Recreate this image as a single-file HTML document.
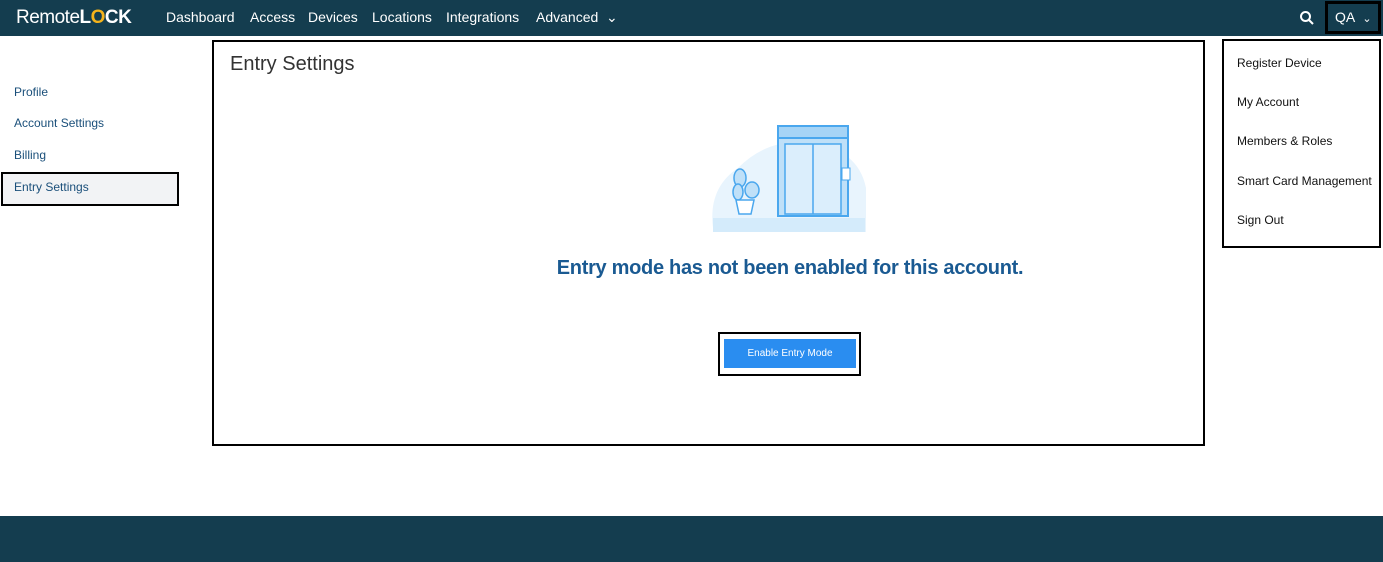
<!DOCTYPE html>
<html><head><style>
*{box-sizing:border-box;margin:0;padding:0}
body{width:1383px;height:562px;position:relative;background:#fff;font-family:"Liberation Sans",sans-serif;overflow:hidden}
.nav{position:absolute;left:0;top:0;width:1383px;height:36px;background:#143d4f;color:#fff}
.nav .logo{position:absolute;left:16px;top:7px;font-size:19px;letter-spacing:-0.5px}
.nav .logo b{font-weight:bold}
.nav .item{position:absolute;top:9px;font-size:14px}
.box{position:absolute;border:2px solid #000}
.side{position:absolute;left:14px;font-size:12px;color:#1a4f7a}
.menu{position:absolute;left:1237px;font-size:12px;color:#111}
.foot{position:absolute;left:0;top:516px;width:1383px;height:46px;background:#143d4f}
</style></head><body>
<div class="nav">
<div class="logo">Remote<b>L<span style="color:#f5b31b">O</span>CK</b></div>
<div class="item" style="left:166px">Dashboard</div>
<div class="item" style="left:250px">Access</div>
<div class="item" style="left:308px">Devices</div>
<div class="item" style="left:372px">Locations</div>
<div class="item" style="left:446px">Integrations</div>
<div class="item" style="left:536px">Advanced &nbsp;⌄</div>
<svg style="position:absolute;left:1299px;top:10px" width="16" height="16" viewBox="0 0 16 16"><circle cx="6.5" cy="6.5" r="4.5" stroke="#fff" stroke-width="2" fill="none"/><path d="M10 10l4 4" stroke="#fff" stroke-width="2"/></svg>
<div class="box" style="left:1325px;top:1px;width:56px;height:33px;border-width:3px"></div>
<div class="item" style="left:1335px">QA <span style="font-size:11px;margin-left:4px">⌄</span></div>
</div>
<div class="side" style="top:85px">Profile</div>
<div class="side" style="top:116px">Account Settings</div>
<div class="side" style="top:148px">Billing</div>
<div class="box" style="left:1px;top:172px;width:178px;height:34px;background:#f2f3f5"></div>
<div class="side" style="top:180px">Entry Settings</div>
<div class="box" style="left:212px;top:40px;width:993px;height:406px"></div>
<div style="position:absolute;left:230px;top:53px;font-size:20px;color:#333">Entry Settings</div>
<svg style="position:absolute;left:708px;top:118px" width="162" height="116" viewBox="0 0 162 116">
<path d="M5 110 Q0 70 30 50 Q60 20 100 25 Q150 30 158 70 L158 114 L5 114 Z" fill="#e8f4fd"/>
<rect x="5" y="100" width="152" height="14" fill="#d4ebfb"/>
<rect x="70" y="8" width="70" height="90" fill="#bfe0f8" stroke="#4aa7ee" stroke-width="2"/>
<rect x="70" y="8" width="70" height="12" fill="#a6d4f6" stroke="#4aa7ee" stroke-width="2"/>
<rect x="77" y="26" width="56" height="70" fill="#dbeefc" stroke="#4aa7ee" stroke-width="1.5"/>
<line x1="105" y1="26" x2="105" y2="96" stroke="#4aa7ee" stroke-width="1.5"/>
<rect x="134" y="50" width="8" height="12" fill="#fff" stroke="#4aa7ee"/>
<ellipse cx="32" cy="60" rx="6" ry="9" fill="#bfe0f8" stroke="#4aa7ee" stroke-width="1.5"/>
<ellipse cx="30" cy="74" rx="5" ry="8" fill="#bfe0f8" stroke="#4aa7ee" stroke-width="1.5"/>
<ellipse cx="44" cy="72" rx="7" ry="8" fill="#bfe0f8" stroke="#4aa7ee" stroke-width="1.5"/>
<path d="M28 82 L46 82 L43 96 L31 96 Z" fill="#fff" stroke="#4aa7ee" stroke-width="1.5"/>
</svg>
<div style="position:absolute;left:0;width:1580px;top:257px;text-align:center;font-size:20px;font-weight:bold;color:#1a5a92;letter-spacing:-0.3px">Entry mode has not been enabled for this account.</div>
<div class="box" style="left:718px;top:332px;width:143px;height:44px"></div>
<div style="position:absolute;left:724px;top:339px;width:132px;height:29px;background:#2a8df0;color:#fff;font-size:10px;text-align:center;line-height:29px">Enable Entry Mode</div>
<div class="box" style="left:1222px;top:39px;width:159px;height:209px"></div>
<div class="menu" style="top:56px">Register Device</div>
<div class="menu" style="top:95px">My Account</div>
<div class="menu" style="top:134px">Members &amp; Roles</div>
<div class="menu" style="top:174px">Smart Card Management</div>
<div class="menu" style="top:213px">Sign Out</div>
<div class="foot"></div>
</body></html>
